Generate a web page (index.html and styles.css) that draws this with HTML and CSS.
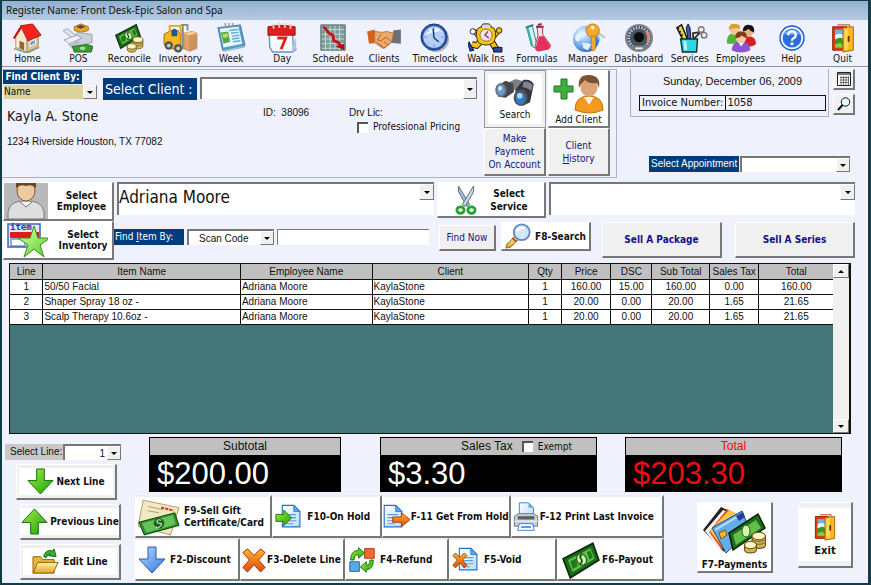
FILE: index.html
```html
<!DOCTYPE html>
<html lang="en">
<head>
<meta charset="utf-8">
<title>Register Name: Front Desk-Epic Salon and Spa</title>
<link rel="stylesheet" href="styles.css">
</head>
<body>
<svg class="defs" width="0" height="0" aria-hidden="true">
  <defs>
    <linearGradient id="gGreen" x1="0" y1="0" x2="1" y2="1"><stop offset="0" stop-color="#a4ee3c"/><stop offset="1" stop-color="#18a010"/></linearGradient>
    <linearGradient id="gStar" x1="0" y1="0" x2="1" y2="1"><stop offset="0" stop-color="#e0ffb0"/><stop offset="1" stop-color="#4fd01c"/></linearGradient>
    <linearGradient id="gBlue" x1="0" y1="0" x2="1" y2="1"><stop offset="0" stop-color="#b8dcff"/><stop offset="1" stop-color="#2f74dc"/></linearGradient>
    <linearGradient id="gOrange" x1="0" y1="0" x2="0" y2="1"><stop offset="0" stop-color="#ffb52e"/><stop offset="1" stop-color="#e0480c"/></linearGradient>
    <linearGradient id="gGold" x1="0" y1="0" x2="0" y2="1"><stop offset="0" stop-color="#fff2a8"/><stop offset="1" stop-color="#e0a52c"/></linearGradient>
    <linearGradient id="gPaper" x1="0" y1="0" x2="1" y2="1"><stop offset="0" stop-color="#ffffff"/><stop offset="1" stop-color="#b9dcf8"/></linearGradient>
    <radialGradient id="gGlobe" cx=".35" cy=".3" r=".8"><stop offset="0" stop-color="#eef7ff"/><stop offset=".5" stop-color="#7fb6ee"/><stop offset="1" stop-color="#1d5fb8"/></radialGradient>
  </defs>
  <symbol id="door" viewBox="0 0 32 32">
    <path d="M5 4h15v25H5z" fill="#e23a12" stroke="#8a1d08"/>
    <path d="M7.500 7h9v19h-9z" fill="#67b4f2"/><path d="M7.500 13q4-3 9 0v4h-9z" fill="#e8f6ff"/><path d="M7.500 18q5-4 9-1v9h-9z" fill="#2f9c22"/><path d="M7.500 23l6-2 3 5h-9z" fill="#8bcf3c"/>
    <path d="M16 5l11-1v25l-11 2z" fill="#ffb81f" stroke="#a85f06"/><path d="M17.500 6.500l4-.5v22l-4 1z" fill="#ffd75e"/><path d="M22 14v6" stroke="#5a3304" stroke-width="2"/><path d="M10 2h13v2" stroke="#c62b0d" fill="none"/>
  </symbol>
  <symbol id="bill" viewBox="0 0 32 32">
    <path d="M1 15L26 2l5 14L7 31z" fill="#1d6b1b" stroke="#0b3009" stroke-width="1.500"/>
    <path d="M5 16L24 6l3.500 9L9 26z" fill="#5fbf45"/><path d="M7 17l5-2.500 1 7-4 2zM21 9.500l3-1.500 2 6-3 1.500z" fill="#1f7a1f"/>
    <ellipse cx="16.500" cy="15.500" rx="4" ry="5" fill="#d9f2b0" stroke="#176017" transform="rotate(-25 16.500 15.500)"/><path d="M17 12q-3 0-1 3t-1 4" stroke="#145514" fill="none" stroke-width="1.500"/>
  </symbol>
  <symbol id="coins" viewBox="0 0 16 16">
    <path d="M6 4v6c0 3 9 3 9 0V4z" fill="#d0b75a" stroke="#6c5212" stroke-width=".7"/><path d="M6 6c1 2 8 2 9 0M6 8c1 2 8 2 9 0" stroke="#6c5212" stroke-width=".6" fill="none"/><ellipse cx="10.500" cy="4" rx="4.500" ry="2.500" fill="#fbf3c4" stroke="#6c5212" stroke-width=".7"/>
    <path d="M1 10v3c0 3 8 3 8 0v-3z" fill="#d0b75a" stroke="#6c5212" stroke-width=".7"/><ellipse cx="5" cy="10" rx="4" ry="2.500" fill="#fbf3c4" stroke="#6c5212" stroke-width=".7"/>
  </symbol>
  <symbol id="page" viewBox="0 0 32 32">
    <path d="M5 2h15l8 8v20H5z" fill="url(#gPaper)" stroke="#2a6fc9" stroke-width="1.500"/><path d="M20 2v8h8z" fill="#5fa8ee" stroke="#2a6fc9"/><path d="M9 14h14M9 18h14M9 22h14M9 26h10" stroke="#5e9be0" stroke-width="1.500"/>
  </symbol>
</svg>

<main class="window">
  <h1 class="title">Register Name: Front Desk-Epic Salon and Spa</h1>

  <nav class="toolbar" aria-label="Main">
    <button class="tool"><svg viewBox="0 0 32 32"><path d="M4 13v13l12 5V17z" fill="#f6ead0" stroke="#b09a70"/><path d="M16 18v13l12-6V14z" fill="#dcc693" stroke="#a58b58"/><path d="M4 14L9 5l7 13z" fill="#f6ead0"/><path d="M9 3L22 1l9 12-14 6z" fill="#f4231c" stroke="#b8120c"/><path d="M9 3L1 16l2 1 7-11z" fill="#c2150f"/><path d="M8 19l5 2v8l-5-2z" fill="#9a6330"/><path d="M19 20l6-3v5l-6 3z" fill="#6fa4dc" stroke="#fff"/><path d="M2 27l14 5 13-6" stroke="#8a9a86" fill="none" stroke-width="1.500"/></svg>Home</button>
    <button class="tool"><svg viewBox="0 0 32 32"><path d="M12 4l7-3 8 3v4l-8 2-7-2z" fill="#e9a227" stroke="#a9741c"/><path d="M14 4l5-2 5 2-5 2z" fill="#4a4a4a"/><path d="M10 14l6-4 15 2v9l-14 3z" fill="#c9d0da" stroke="#9aa3af"/><path d="M0 8l5-2 10 9-3 3z" fill="#e1e5ea" stroke="#9aa3af"/><path d="M1 18l14-5 5 3-13 6z" fill="#eef1f5" stroke="#9aa3af"/><path d="M5 23l12-5v4l-8 5z" fill="#b9c0ca"/><path d="M10 25l16-2 6 2-2 6H12z" fill="#3c9a35" stroke="#1f6a1b"/><ellipse cx="21" cy="27" rx="3" ry="2" fill="#a9d98b"/></svg>POS</button>
    <button class="tool"><svg viewBox="0 0 32 32"><use href="#bill" width="30" height="28"/><use href="#coins" x="13" y="13" width="19" height="19"/></svg>Reconcile</button>
    <button class="tool"><svg class="wide" viewBox="0 0 38 32"><path d="M2 12l7-4h8l3 6v10l-8 4-10-5z" fill="#f5b81c" stroke="#9c6a08"/><path d="M8 9V3h11l2 11" fill="none" stroke="#e5a614" stroke-width="2"/><path d="M10 8q3-4 6 0v6h-6z" fill="#2b4f9e"/><circle cx="7" cy="24" r="4.500" fill="#555"/><circle cx="7" cy="24" r="2" fill="#ccc"/><circle cx="17" cy="27" r="4.500" fill="#555"/><circle cx="17" cy="27" r="2" fill="#ccc"/><path d="M20 2h7v6M22 2v25h14" stroke="#8a8a8a" stroke-width="2" fill="none"/><path d="M23 11l9-2 5 2v16l-8 3-6-3z" fill="#dba56b" stroke="#b98550"/><path d="M29 13l8-2v16l-8 3z" fill="#cc935a"/><path d="M23 11l6 2 8-2-5-2z" fill="#f2cb98"/></svg>Inventory</button>
    <button class="tool"><svg viewBox="0 0 32 32"><path d="M2 5l24-3 5 22-24 5z" fill="#5c9cc8" stroke="#3f7ca5"/><path d="M4 6l20-2 4 18-20 4z" fill="#e8f6fd"/><path d="M5 10l8-1 2 11-7 2z" fill="#5ba84b"/><path d="M7 12l5-1 1 4-5 1z" fill="#b7df6e"/><path d="M14 8l10-1M16 11l8-1M17 14l8-1M17 17l8-1M18 20l8-1" stroke="#5eaad8" stroke-width="1.500"/><path d="M10 0v5M14 0v5M18 0v4" stroke="#999" stroke-width="1.500"/><path d="M7 29l24-5v2L8 31z" fill="#9bbdd4"/></svg>Week</button>
    <button class="tool"><svg viewBox="0 0 32 32"><path d="M2 5h25l1 20 3 3-4 3H6L3 26z" fill="#f7fbff" stroke="#6c8fd0" stroke-width="1.500"/><path d="M26 29l5-14v13z" fill="#a8c4ef"/><path d="M1 4q14-3 29 0v9H1z" fill="#df1f1d" stroke="#9d100e"/><path d="M7 1v5M13 0v5M19 0v5M25 1v5" stroke="#f4c8c4" stroke-width="2"/><path d="M11 16h9l-5 12" stroke="#e02020" stroke-width="3" fill="none"/></svg>Day</button>
    <button class="tool"><svg viewBox="0 0 32 32"><path d="M3 2h26v27H3z" fill="#7d9c99" stroke="#586a68"/><path d="M4 7h24M4 12h24M4 17h24M4 22h24M4 27h24M8 3v26M13 3v26M18 3v26M23 3v26" stroke="#c3dad6" stroke-width="1"/><path d="M6 4l6 7 4 2 1 6 5 2 3 5" stroke="#c4141c" stroke-width="3" fill="none"/><path d="M19 25l9-3v7z" fill="#b00d14"/></svg>Schedule</button>
    <button class="tool"><svg class="wide" viewBox="0 0 38 32"><path d="M1 9l8-2 3 14-9 1z" fill="#d8601a"/><path d="M37 7l-8 1-3 13 11 1z" fill="#6c7076"/><path d="M9 9l8 1 5-1 7 2-2 10-9 6-9-6z" fill="#eda96b" stroke="#b9763c"/><path d="M16 12l-4 6 4 1 5-4 7 6M13 22l4 3M11 20l8 7 3-2M19 20l5 4" stroke="#a8652f" fill="none"/></svg>Clients</button>
    <button class="tool"><svg viewBox="0 0 32 32"><circle cx="17" cy="17" r="14" fill="#a8b0c0"/><circle cx="15" cy="15" r="14" fill="#2c56b0" stroke="#16316e"/><circle cx="15" cy="15" r="11.500" fill="#b5cff4"/><path d="M5 13q10-14 20-3-8-2-20 3z" fill="#e9f3fe"/><path d="M15 5v2M15 23v2M5 15h2M23 15h2M8 8l1 1M22 8l-1 1M8 22l1-1M22 22l-1-1" stroke="#4e79c4"/><path d="M14 6l1 10 5 4" stroke="#14306c" stroke-width="1.500" fill="none"/></svg>Timeclock</button>
    <button class="tool"><svg class="wide" viewBox="0 0 38 32"><path d="M11 14l-5-6M28 14l5-7" stroke="#222" stroke-width="5"/><path d="M11 14l-5-6M28 14l5-7" stroke="#f6c012" stroke-width="3"/><circle cx="5" cy="9" r="3" fill="#fff" stroke="#222"/><circle cx="33" cy="8" r="3" fill="#f6c012" stroke="#222"/><path d="M13 20l-4 4-5-1M25 20l5 8" stroke="#111" stroke-width="7" fill="none"/><path d="M13 20l-4 4-5-1M25 20l5 8" stroke="#f6c012" stroke-width="5" fill="none"/><path d="M27 26h9v5h-9zM1 20l5 9-4 1-2-7z" fill="#26479d" stroke="#111"/><path d="M10 6q9-6 18 0 3 8-1 15-8 5-16 0-4-8-1-15z" fill="#f8c617" stroke="#3a2d05"/><circle cx="19" cy="13" r="6.500" fill="#dbe9f8" stroke="#967004"/><path d="M21 9l-3 4 4 3" stroke="#c61b2d" stroke-width="1.500" fill="none"/><path d="M14 5q0-5 5-4 5-1 6 4" fill="#d9d9d9" stroke="#222"/></svg>Walk Ins</button>
    <button class="tool"><svg viewBox="0 0 32 32"><path d="M5 5l6-2 5 21q-3 4-6 0z" fill="#d9f3f1" stroke="#2f7d7c"/><path d="M5 6l2-1 5 19-2 1z" fill="#35b0ab"/><path d="M4 5l8-3" stroke="#2f7d7c" stroke-width="2"/><path d="M16 4h6v8l8 11q1 4-3 5l-10 2q-3-1-3-5l3-12z" fill="#fbe0e8" stroke="#a03a58"/><path d="M18 14h5l7 10q0 3-3 4l-10 2q-3-1-2-5z" fill="#e3305f"/><path d="M15 4h8M17 2l4-1" stroke="#8a2946" stroke-width="2" fill="none"/></svg>Formulas</button>
    <button class="tool"><svg class="wide" viewBox="0 0 38 32"><circle cx="17" cy="17" r="14" fill="url(#gGlobe)"/><path d="M5 14q7-8 13-3-2 5-6 4-2 6-6 4zM13 21l10 1-4 7-5-2z" fill="#dff0fd"/><path d="M27 8l10 8M28 11l4 8" stroke="#b9bfc7" stroke-width="2"/><circle cx="24" cy="8" r="7" fill="#f6a92c" stroke="#c57e12"/><circle cx="24" cy="5" r="2" fill="#fff2cf"/><path d="M22 14h5v13l-2 3-3-3 1-2-1-2 1-2z" fill="#f6a92c" stroke="#c57e12"/></svg>Manager</button>
    <button class="tool"><svg viewBox="0 0 32 32"><circle cx="16" cy="16" r="15" fill="#85888e"/><circle cx="16" cy="16" r="13" fill="#4a525e"/><circle cx="16" cy="16" r="11" fill="none" stroke="#b9cfe4" stroke-width="3" stroke-dasharray="1.500 1.500"/><path d="M24 9q4 6 1 12" stroke="#dc8a78" stroke-width="3" fill="none"/><circle cx="16" cy="15" r="5.500" fill="#0b0c0e"/><path d="M6 24h20l-4 5H10z" fill="#777b82"/><path d="M12 27h8" stroke="#eee" stroke-width="2"/></svg>Dashboard</button>
    <button class="tool"><svg class="wide" viewBox="0 0 38 32"><path d="M12 19L5 5l5-3 7 17" fill="#e5dc3f" stroke="#111" stroke-width="1.500"/><path d="M17 19l-2-14 2-4 2 4 1 14" fill="#4457b0" stroke="#111"/><path d="M21 19l9-9M23 20l-1-9 12-2" stroke="#333" stroke-width="2" fill="none"/><circle cx="31" cy="7" r="3" fill="#eee" stroke="#777" stroke-width="1.500"/><circle cx="34" cy="13" r="3" fill="#eee" stroke="#777" stroke-width="1.500"/><path d="M9 17h18l-1 14H11z" fill="#2fd5df" stroke="#0b2f33" stroke-width="1.500"/><path d="M12 19h3l1 10h-3z" fill="#b8fbff"/><path d="M6 5l5 9" stroke="#222" stroke-width="2" stroke-dasharray="2 2"/></svg>Services</button>
    <button class="tool"><svg viewBox="0 0 32 32"><path d="M1 19q0-8 8-8t8 8v3H1z" fill="#55b33c"/><circle cx="9" cy="7" r="5.500" fill="#f4c798"/><path d="M3 7q0-7 7-6 6 0 5 5-4-2-12 1z" fill="#d8a32b"/><path d="M16 22q0-8 8-8t8 8q-2 3-8 3z" fill="#d7201f"/><circle cx="24" cy="9" r="5.500" fill="#e9b385"/><path d="M18 9q0-8 7-7 6 0 5 8-4-1-6-4-2 2-6 3z" fill="#17130f"/><path d="M6 29q0-9 10-9t10 9q-10 5-20 0z" fill="#8b55cf"/><path d="M13 20l3 5 4-5z" fill="#fff"/><circle cx="16" cy="16" r="5.500" fill="#f5cba2"/><path d="M10 16q0-8 7-7 6 0 5 7-4-1-5-3-2 3-7 3z" fill="#7d3c15"/></svg>Employees</button>
    <button class="tool"><svg viewBox="0 0 32 32"><circle cx="16" cy="16" r="13.500" fill="#1f57c9"/><circle cx="16" cy="16" r="12" fill="#eef5ff"/><circle cx="16" cy="16" r="10" fill="#2d6ce0"/><path d="M7 12q9-9 18 0-9 1-18 0z" fill="#7eaaf3"/><path d="M12 13q0-4 4-4t4 4q0 2-2 3-2 1-2 3" stroke="#fff" stroke-width="2.500" fill="none"/><circle cx="16" cy="22" r="1.700" fill="#fff"/></svg>Help</button>
    <button class="tool"><svg viewBox="0 0 32 32"><use href="#door" width="32" height="32"/></svg>Quit</button>
  </nav>

  <section class="top">
    <div class="client">
      <div class="client-main">
        <div class="finder">
          <div class="find-by">
            <label class="tag tag-bold" for="findBy">Find Client By:</label>
            <span class="combo khaki"><select id="findBy"><option>Name</option></select><i class="arrow"></i></span>
          </div>
          <label class="tag tag-big" for="client">Select Client :</label>
          <span class="combo client-combo"><select id="client"><option></option></select><i class="arrow"></i></span>
        </div>
        <div class="details">
          <div class="person"><strong class="name">Kayla A. Stone</strong><span>1234 Riverside Houston, TX 77082</span></div>
          <span class="ident">ID:&nbsp; 38096</span>
          <div class="licence"><span>Drv Lic:</span><label class="check"><input type="checkbox"> Professional Pricing</label></div>
        </div>
      </div>
      <div class="client-actions">
        <button class="btn tile"><svg viewBox="0 0 44 32"><path d="M14 6l9-4 9 3-2 7-12 2z" fill="#7b8087"/><path d="M2 10l10-6 8 3 1 9-9 6-8-1z" fill="#44484e"/><ellipse cx="7" cy="14" rx="6" ry="7.500" fill="#6d7178"/><ellipse cx="7" cy="14" rx="4" ry="5.500" fill="#5f9fd8"/><ellipse cx="6" cy="12" rx="2" ry="2.500" fill="#d2eafb"/><path d="M22 14l9-11q9-1 11 5l-4 19-8 4z" fill="#33373c"/><path d="M31 5q6-1 10 4l-2 6q-4-4-9-4z" fill="#80858d"/><ellipse cx="28" cy="22" rx="7.500" ry="9" fill="#50555c"/><ellipse cx="28" cy="23" rx="5" ry="6.500" fill="#2a7bd1"/><ellipse cx="27" cy="20" rx="3" ry="3" fill="#a9d8ff"/></svg>Search</button>
        <button class="btn tile flush"><svg viewBox="0 0 52 40"><path d="M8 5h6v7h6v6h-6v7H8v-7H1v-6h7z" fill="#3fae3c" stroke="#157a1c"/><path d="M22 36q0-14 14-14t14 14q-13 6-28 0z" fill="#f19a1f" stroke="#c8740a"/><path d="M31 23l5 8 5-8z" fill="#fff1dd"/><ellipse cx="36" cy="13" rx="8.500" ry="10" fill="#dba477"/><path d="M26 14q-2-14 11-13 11 1 9 13l-2-5q-8 1-12-3-4 3-6 8z" fill="#7c5230"/></svg>Add Client</button>
        <button class="btn link-btn">Make<br>Payment<br>On Account</button>
        <button class="btn link-btn">Client<br><u>H</u>istory</button>
      </div>
    </div>
    <aside class="invoice">
      <div class="invoice-row">
        <div class="invoice-box">
          <time class="date" datetime="2009-12-06">Sunday, December 06, 2009</time>
          <div class="number"><label for="inv">Invoice Number:</label><input id="inv" value="1058"></div>
        </div>
        <div class="mini">
          <button class="btn mini-btn" aria-label="Calendar"><svg viewBox="0 0 14 14"><path d="M.5.500h13v13H.5z" fill="#fff" stroke="#222"/><path d="M1 2h12" stroke="#777" stroke-width="2"/><path d="M3 5.500h9M3 8h9M3 10.500h9M4 4v9M6.500 4v9M9 4v9M11.500 4v9" stroke="#555" stroke-width=".8"/></svg></button>
          <button class="btn mini-btn" aria-label="Look up"><svg viewBox="0 0 14 14"><circle cx="8.500" cy="5" r="4.200" fill="#e7fbff" stroke="#111"/><path d="M5.500 8L1 13" stroke="#111" stroke-width="2"/></svg></button>
        </div>
      </div>
      <div class="appointment"><label class="tag" for="appt">Select Appointment</label><span class="combo"><select id="appt"><option></option></select><i class="arrow"></i></span></div>
    </aside>
  </section>

  <section class="entry">
    <div class="pickers">
      <button class="btn white picker emp"><svg viewBox="0 0 44 36"><path d="M0 0h44v36H0z" fill="#b9b9b9"/><path d="M4 36q-2-16 12-18l6 4 6-4q14 2 12 18z" fill="#dedede" stroke="#777"/><ellipse cx="22" cy="8" rx="9" ry="10" fill="#eccb9f" stroke="#77583a"/><path d="M12 5V0h20v5q-4-4-10-2-6-2-10 2z" fill="#6b4520"/><path d="M16 19l6 5 6-5" fill="#f4f4f4" stroke="#777"/></svg><span>Select<br>Employee</span></button>
      <button class="btn white picker inv"><svg viewBox="0 0 44 36"><path d="M4 2h32v23H4z" fill="#dfeaf8" stroke="#3a64b8" stroke-width="1.500"/><path d="M6 10h29v6H6z" fill="#df1c1c"/><path d="M7 17h14v7H7z" fill="#fff" stroke="#3a64b8"/><text x="6" y="8" class="item-text">item</text><path d="M30 4l4 12h12l-10 7 4 12-10-8-10 8 4-12-10-7h12z" fill="url(#gStar)" stroke="#3f8c20"/></svg><span>Select<br>Inventory</span></button>
    </div>
    <div class="entry-rows">
      <div class="entry-row">
        <span class="combo tall employee"><select aria-label="Employee"><option>Adriana Moore</option></select><i class="arrow"></i></span>
        <button class="btn white service"><svg viewBox="0 0 24 32"><path d="M4 1q-2 5 2 10l7 12 3-2z" fill="#9fc0d6" stroke="#567"/><path d="M20 1q2 5-2 10l-7 12-3-2z" fill="#c5dbe9" stroke="#567"/><ellipse cx="6" cy="27" rx="4" ry="3.500" fill="none" stroke="#22a32a" stroke-width="3"/><ellipse cx="18" cy="27" rx="4" ry="3.500" fill="none" stroke="#22a32a" stroke-width="3"/></svg><span>Select<br>Service</span></button>
        <span class="combo tall service-combo"><select aria-label="Service"><option></option></select><i class="arrow"></i></span>
      </div>
      <div class="entry-row find-row">
        <div class="find-item">
          <label class="tag" for="by">Find <u>I</u>tem By:</label>
          <span class="combo scan"><select id="by"><option>Scan Code</option></select><i class="arrow"></i></span>
          <input class="code" aria-label="Item">
        </div>
        <button class="btn find-now">Find Now</button>
        <button class="btn white f8"><svg viewBox="0 0 28 28"><path d="M11 14L2 23l-1 4 5-1 9-9z" fill="url(#gGold)" stroke="#8a5a10"/><path d="M8 16l4 4" stroke="#c2401c" stroke-width="2"/><circle cx="18" cy="10" r="8.500" fill="#cfe6fb" stroke="#6288ba" stroke-width="2"/><path d="M13 9q2-5 8-3" stroke="#fff" stroke-width="2.500" fill="none"/></svg>F8-Search</button>
        <button class="btn sell">Sell A Package</button>
        <button class="btn sell">Sell A Series</button>
      </div>
    </div>
  </section>

  <section class="grid-box">
    <div class="grid-body">
      <table>
        <colgroup><col class="c-line"><col class="c-item"><col class="c-emp"><col class="c-client"><col class="c-qty"><col class="c-price"><col class="c-dsc"><col class="c-sub"><col class="c-tax"><col class="c-total"></colgroup>
        <thead><tr><th>Line</th><th>Item Name</th><th>Employee Name</th><th>Client</th><th>Qty</th><th>Price</th><th>DSC</th><th>Sub Total</th><th>Sales Tax</th><th>Total</th></tr></thead>
        <tbody>
          <tr><td>1</td><td>50/50 Facial</td><td>Adriana Moore</td><td>KaylaStone</td><td>1</td><td>160.00</td><td>15.00</td><td>160.00</td><td>0.00</td><td>160.00</td></tr>
          <tr><td>2</td><td>Shaper Spray 18 oz -</td><td>Adriana Moore</td><td>KaylaStone</td><td>1</td><td>20.00</td><td>0.00</td><td>20.00</td><td>1.65</td><td>21.65</td></tr>
          <tr><td>3</td><td>Scalp Therapy 10.6oz -</td><td>Adriana Moore</td><td>KaylaStone</td><td>1</td><td>20.00</td><td>0.00</td><td>20.00</td><td>1.65</td><td>21.65</td></tr>
        </tbody>
      </table>
    </div>
    <div class="scroll"><i class="arrow up"></i><i class="arrow"></i></div>
  </section>

  <section class="bottom">
    <div class="lines">
      <div class="select-line"><label for="line">Select Line:</label><span class="combo"><select id="line"><option>1</option></select><i class="arrow"></i></span></div>
      <button class="btn line-btn next"><span class="face"><svg viewBox="0 0 28 28"><path d="M10 1h8v12h9L14 27 1 13h9z" fill="url(#gGreen)" stroke="#12700c"/></svg>Next Line</span></button>
      <button class="btn line-btn"><span class="face"><svg viewBox="0 0 28 28"><path d="M10 27h8V15h9L14 1 1 15h9z" fill="url(#gGreen)" stroke="#12700c"/></svg>Previous Line</span></button>
      <button class="btn line-btn"><span class="face edit"><svg viewBox="0 0 28 28"><path d="M1 9h8l2 3h12v14H1z" fill="#e8b43a" stroke="#94660e"/><path d="M6 15h21l-5 11H1z" fill="url(#gGold)" stroke="#94660e"/><path d="M12 9q2-8 9-6l2-2 2 8-8-1 2-2q-3-1-4 4z" fill="#35b02a" stroke="#176b10"/></svg>Edit Line</span></button>
    </div>
    <div class="work">
      <div class="totals">
        <div class="total"><h2>Subtotal</h2><output>$200.00</output></div>
        <div class="total"><h2>Sales Tax <label class="check"><input type="checkbox"> Exempt</label></h2><output>$3.30</output></div>
        <div class="total red"><h2>Total</h2><output>$203.30</output></div>
      </div>
      <div class="actions">
        <div class="keys">
          <div class="key-row row-a">
            <button class="btn key"><svg class="big" viewBox="0 0 40 36"><path d="M5 2l34 7-8 26-31-8z" fill="#f2e8c4" stroke="#b5a36b"/><path d="M10 8l14 3M9 12l11 2" stroke="#b5a36b"/><path d="M22 9l12 3" stroke="#d63a2c" stroke-width="2" stroke-dasharray="3 1"/><path d="M1 23l34-9 4 12-33 9z" fill="#2f9130" stroke="#0d4a0e"/><path d="M4 24l29-8 3 9-28 8z" fill="#66c256"/><circle cx="20" cy="24" r="5" fill="#1d621c"/><path d="M22 21q-4-1-4 1t3 2 0 3-4 0" stroke="#c8efb8" fill="none"/></svg><span>F9-Sell Gift<br>Certificate/Card</span></button>
            <button class="btn key"><svg viewBox="0 0 32 32"><use href="#page" x="4" width="28" height="30"/><path d="M1 13h9V8l9 9-9 9v-5H1z" fill="url(#gGreen)" stroke="#12700c"/></svg>F10-On Hold</button>
            <button class="btn key tight"><svg viewBox="0 0 32 32"><use href="#page" x="-3" width="28" height="30"/><path d="M11 16h10v-5l10 8-10 8v-5H11z" fill="url(#gOrange)" stroke="#9a3b06"/></svg>F-11 Get From Hold</button>
            <button class="btn key tight"><svg viewBox="0 0 32 36"><path d="M8 1h11l6 6v11H8z" fill="url(#gPaper)" stroke="#2a6fc9"/><path d="M19 1v6h6z" fill="#5fa8ee"/><path d="M2 17l5-3h18l5 3v12H2z" fill="#c9ced6" stroke="#59616d"/><path d="M6 17h20v4H6z" fill="#5b616a"/><path d="M2 23h28" stroke="#fff"/><path d="M8 26h16l2 8H6z" fill="#fff" stroke="#2a6fc9"/><path d="M10 30h12" stroke="#3f87df" stroke-width="2"/></svg>F-12 Print Last Invoice</button>
          </div>
          <div class="key-row row-b">
            <button class="btn key"><svg viewBox="0 0 28 28"><path d="M10 1h8v12h9L14 27 1 13h9z" fill="url(#gBlue)" stroke="#2358b4"/></svg>F2-Discount</button>
            <button class="btn key tight"><svg class="cross" viewBox="0 0 28 28"><path d="M7 2l7 7 7-7 5 4-7 8 7 8-5 5-7-8-7 8-5-5 7-8-7-8z" fill="url(#gOrange)" stroke="#a32c05"/></svg>F3-Delete Line</button>
            <button class="btn key"><svg viewBox="0 0 32 30"><path d="M19 2h11v11H19z" fill="#f2682d" stroke="#a83404"/><path d="M2 17h11v11H2z" fill="#58a8ee" stroke="#1e5ca8"/><path d="M3 15Q3 4 12 4V1l7 6-7 6V9q-5 0-5 6z" fill="url(#gGreen)" stroke="#12700c"/><path d="M29 15q0 11-8 11v3l-7-6 7-6v4q4 0 4-6z" fill="url(#gGreen)" stroke="#12700c"/></svg>F4-Refund</button>
            <button class="btn key"><svg viewBox="0 0 32 32"><use href="#page" x="4" width="28" height="30"/><path d="M4 8l5 5 5-5 3 3-5 5 5 6-3 3-5-6-5 6-3-3 5-6-5-5z" fill="url(#gOrange)" stroke="#9a3b06"/></svg>F5-Void</button>
            <button class="btn key payout"><svg class="big" viewBox="0 0 32 32"><use href="#bill" width="32" height="32"/></svg>F6-Payout</button>
          </div>
        </div>
        <button class="btn white pay"><svg viewBox="0 0 66 48"><path d="M1 24L19 1l17 8-14 37z" fill="#222"/><path d="M3 25L21 4l12 5-15 34z" fill="#f3f3f3"/><path d="M7 26L25 3l10 5-15 36z" fill="#e8501c"/><path d="M8 25L27 4l10 5-15 34z" fill="#f9c84c"/><path d="M10 22l30-17 8 20-24 22z" fill="#63aee9" stroke="#1b4c86"/><path d="M13 24l27-16" stroke="#bde0fb" stroke-width="2"/><path d="M34 10l7-4 2 5-6 4z" fill="#2a3d93"/><path d="M17 27l6-3 2 5-6 4z" fill="#f4b62c" stroke="#805306"/><path d="M27 27L56 8l7 14-32 22z" fill="#1d6b1b" stroke="#061f05" stroke-width="1.500"/><path d="M31 29l23-15 5 8-25 17z" fill="#63bd49"/><ellipse cx="44" cy="25" rx="4" ry="6" fill="#d9f2b0" stroke="#176017"/><use href="#coins" x="41" y="24" width="24" height="24"/></svg>F7-Payments</button>
        <button class="btn exit"><span class="face"><svg viewBox="0 0 32 32"><use href="#door" width="32" height="32"/></svg>Exit</span></button>
      </div>
    </div>
  </section>
</main>
</body>
</html>
```
FILE: styles.css
```css
:root {
  --ui: "DejaVu Sans Condensed", "DejaVu Sans", Tahoma, sans-serif;
  --arial: "Liberation Sans", Arial, sans-serif;
  --navy: #003c7c;
  --panel: #eff2fd;
  --link: #10108c;
}
* { box-sizing: border-box; }
body { margin: 0; font: 10px/12px var(--ui); color: #111; background: var(--panel); }
button, select, input { font: inherit; color: inherit; margin: 0; padding: 0; border-radius: 0; }
svg { display: block; flex: none; }
h1, h2 { margin: 0; font-weight: normal; }
.defs { position: absolute; }

.window {
  min-height: 100vh; display: flex; flex-direction: column;
  border: solid #143c46; border-width: 1px 3px 2px 2px; background: var(--panel);
}
.title {
  height: 19px; padding-left: 4px; font: 10px/19px "Noto Sans", sans-serif; color: #111;
  background: linear-gradient(#92afd0, #b5cbe4);
}

.toolbar { display: grid; grid-template-columns: repeat(17, minmax(0, 1fr)); height: 47px; border-bottom: 1px solid #8f939c; }
.tool {
  display: flex; flex-direction: column; align-items: center; padding: 3px 0 0;
  border: 0; background: none; white-space: nowrap; line-height: 12px;
}
.tool svg { width: 30px; height: 30px; }
.tool svg.wide { width: 36px; }

.btn {
  display: flex; align-items: center; justify-content: center;
  border: 1px solid; border-color: #fff #777 #777 #fff; border-width: 1px 2px 2px 1px;
  background: #f0f0f0; white-space: nowrap;
}
.white { background: #fff; }
.tag { background: var(--navy); color: #fff; white-space: nowrap; padding: 0 2px; }

.combo { display: grid; grid-template-columns: minmax(0, 1fr); background: #fff; border: solid #777; border-width: 2px 0 0 2px; height: 16px; }
.combo select, .combo .arrow { grid-area: 1 / 1; }
.combo select { appearance: none; border: 0; background: none; width: 100%; }
.arrow {
  display: flex; align-items: center; justify-content: center; width: 14px; height: 14px;
  border: 1px solid; border-color: #fff #777 #777 #fff; background: #f0f0f0;
}
.combo .arrow { justify-self: end; pointer-events: none; }
.arrow::before { content: ""; border: 3px solid transparent; border-top-color: #000; border-bottom: 0; }
.arrow.up::before { border-top: 0; border-bottom: 3px solid #000; }
.check { display: inline-flex; align-items: center; gap: 5px; }
.check input {
  appearance: none; width: 11px; height: 11px; background: #fff;
  border: solid #555; border-width: 2px 0 0 2px;
}

.top { display: flex; height: 111px; padding-top: 2px; }
.client { flex: 1; display: flex; border: 1px solid #aeb2bb; border-left: 0; }
.client-main { flex: 1; display: flex; flex-direction: column; }
.finder { display: flex; padding-left: 1px; }
.find-by { width: 95px; margin-right: 5px; }
.find-by .tag { display: block; width: 79px; text-align: center; }
.tag-bold { font-weight: bold; line-height: 14px; }
.khaki { background: #dcd39c; border-width: 1px; border-color: #eee; }
.tag-big { align-self: flex-end; width: 94px; font-size: 14px; line-height: 22px; margin-right: 3px; }
.client-combo { flex: 1; height: 22px; margin: 7px 7px 0 0; }
.client-combo .arrow { height: 20px; }
.details { display: grid; grid-template-columns: 256px 86px 1fr; padding: 6px 0 0 5px; }
.details, .details .check { font: 10px/14px var(--arial); }
.person { display: flex; flex-direction: column; gap: 9px; }
.person .name { font: 14px/20px var(--ui); }
.licence { display: flex; flex-direction: column; align-items: flex-start; }
.licence .check { margin-left: 8px; font-family: var(--ui); }
.client-actions { display: grid; grid-template-columns: 62px 62px; grid-template-rows: 58px 48px; column-gap: 2px; padding-right: 6px; }
.tile { flex-direction: column; background: #fff; gap: 2px; }
.tile:first-child { border: solid #f0f0f0; border-width: 4px; outline: 1px solid #999; outline-offset: -1px; }
.tile:first-child svg { width: 42px; height: 30px; }
.tile.flush { justify-content: flex-end; gap: 0; }
.flush svg { width: 52px; height: 40px; }
.link-btn { display: block; text-align: center; color: var(--link); line-height: 13px; }

.invoice { width: 251px; padding: 0 13px 0 13px; display: flex; flex-direction: column; justify-content: space-between; }
.invoice-row { display: flex; gap: 4px; }
.invoice-box { flex: 1; height: 48px; padding: 5px 2px 0 8px; border: 1px solid #aeb2bb; border-top: 0; }
.date { display: block; text-align: center; font: 11px/15px var(--arial); }
.number { display: flex; margin-top: 6px; height: 16px; border: 1px solid #111; font: 11px/14px var(--ui); }
.number label { padding: 0 2px; border-right: 1px solid #111; }
.number input { flex: 1; min-width: 0; border: 0; background: none; padding-left: 1px; }
.mini { display: flex; flex-direction: column; gap: 4px; }
.mini-btn { width: 22px; height: 21px; }
.mini-btn svg { width: 14px; height: 14px; }
.appointment { display: flex; gap: 1px; margin: 0 5px 6px 19px; font: 10px/15px var(--arial); }
.appointment .combo { flex: 1; }

.entry { display: flex; height: 85px; padding: 4px 13px 0 1px; }
.pickers { width: 111px; display: flex; flex-direction: column; }
.picker, .service, .f8, .line-btn, .key, .pay, .exit { font-weight: bold; line-height: 11px; }
.picker { height: 39px; justify-content: flex-start; gap: 3px; padding: 0; }
.picker.inv { gap: 6px; }
.picker span { flex: 1; }
.picker svg { width: 44px; height: 36px; }
.item-text { font: bold 9px "DejaVu Sans Mono", monospace; fill: #153f93; }
.entry-rows { flex: 1; min-width: 0; }
.entry-row { display: flex; gap: 3px; padding-left: 3px; }
.tall { height: 33px; }
.tall .arrow { height: 16px; width: 15px; }
.employee { flex: 319; font-size: 17px; }
.employee select { height: 26px; line-height: 26px; }
.service { width: 109px; height: 36px; gap: 13px; line-height: 13px; }
.service svg { width: 22px; height: 30px; }
.service-combo { flex: 307; }
.find-row { padding: 4px 0 0; gap: 0; align-items: flex-start; }
.find-item { flex: 1; display: flex; align-items: center; gap: 3px; margin: 7px 10px 0 0; font: 10px/16px var(--arial); }
.find-item .tag { width: 70px; font-family: var(--ui); padding: 0 1px; }
.scan { width: 87px; }
.scan select { padding-left: 10px; }
.code { flex: 1; min-width: 0; height: 16px; border: solid #777; border-width: 1px 0 0 1px; background: #fff; }
.find-now { width: 57px; height: 26px; margin: 3px 5px 0 0; color: var(--link); }
.f8 { width: 90px; height: 29px; gap: 4px; margin-right: 11px; }
.f8 svg { width: 26px; height: 26px; }
.sell { width: 120px; height: 36px; color: var(--link); font-weight: bold; }
.sell + .sell { margin-left: 13px; }

.grid-box { display: flex; flex: 1 0 170px; margin: 0 17px 0 7px; border: 1px solid #111; border-width: 1px 2px 1px 1px; }
.grid-body { flex: 1; background: #447679; }
table { width: 100%; table-layout: fixed; border-collapse: collapse; font: 10px/13px var(--arial); }
th { background: #c0c0c0; font-weight: normal; }
td { background: #fff; text-align: center; }
th, td { padding: 0 1px; border: 1px solid #111; white-space: nowrap; height: 15px; }
tr > :first-child { border-left: 0; }
tr > :last-child { border-right: 0; }
thead th { border-top: 0; }
td:nth-child(2), td:nth-child(3), td:nth-child(4) { text-align: left; }
.c-line { width: 4%; } .c-item { width: 24%; } .c-emp { width: 16%; } .c-client { width: 19%; }
.c-qty { width: 4%; } .c-price { width: 6%; } .c-dsc { width: 5%; } .c-sub { width: 7%; }
.c-tax { width: 6%; } .c-total { width: 9%; }
.scroll { width: 16px; display: flex; flex-direction: column; justify-content: space-between; background: #f0f0f0; }
.scroll .arrow { width: 100%; }

.bottom { display: flex; padding: 3px 15px 2px 3px; }
.lines { width: 116px; margin-right: 14px; display: flex; flex-direction: column; align-items: flex-end; gap: 4px; padding-top: 7px; }
.select-line { display: flex; align-self: stretch; font: 10px/16px var(--arial); }
.select-line label { width: 58px; padding-left: 5px; background: #c8c8c8; }
.select-line .combo { flex: 1; }
.select-line select { text-align: right; padding-right: 16px; }
.line-btn { width: 101px; height: 36px; padding: 3px 2px; }
.next { margin-right: 4px; }
.face { display: flex; align-items: center; justify-content: center; gap: 2px; height: 100%; background: #fff; }
.line-btn .face { flex: 1; }
.line-btn svg { width: 27px; height: 27px; }
.line-btn .edit { gap: 4px; }
.work { flex: 1; }
.totals { display: flex; justify-content: space-between; padding: 0 11px 0 14px; }
.total { flex: 0 1 217px; background: #000; color: #fff; }
.total:first-child { flex-basis: 192px; }
.total:nth-child(2) { margin-left: 11px; }
.total h2 { display: flex; align-items: center; justify-content: center; height: 19px; border: 1px solid #000; background: #c0c0c0; color: #111; font: 12px/17px var(--arial); }
.total h2 .check { font: 10px/14px var(--ui); margin-left: 9px; }
.total:nth-child(2) h2 { padding-left: 56px; }
.total output { display: block; padding-left: 8px; font: 31px/36px var(--arial); }
.total.red h2, .total.red output { color: #f00b12; }
.actions { display: flex; margin-top: 3px; align-items: flex-start; }
.keys { flex: 1; }
.key-row { display: grid; }
.row-a { grid-template-columns: 138fr 110fr 127fr 154fr; }
.row-b { grid-template-columns: 105fr 105fr 104fr 108fr 107fr; }
.key { height: 43px; gap: 4px; padding: 0 2px; background: #fff; border-top: 2px solid #eee; line-height: 12px; justify-content: flex-start; text-align: left; }
.key svg { width: 28px; height: 30px; }
.key svg.big { width: 42px; height: 38px; }
.key svg.cross { width: 26px; height: 26px; }
.key.tight { gap: 0; padding: 0; }
.key.payout { gap: 0; }
.pay { flex-direction: column; width: 76px; height: 71px; gap: 4px; margin: 7px 25px 0 33px; }
.pay svg { width: 66px; height: 50px; }
.exit { width: 55px; height: 66px; margin-top: 7px; padding: 5px 0; }
.exit .face { flex: 1; flex-direction: column; font-size: 11px; gap: 4px; }
.exit svg { width: 28px; height: 28px; }
```
